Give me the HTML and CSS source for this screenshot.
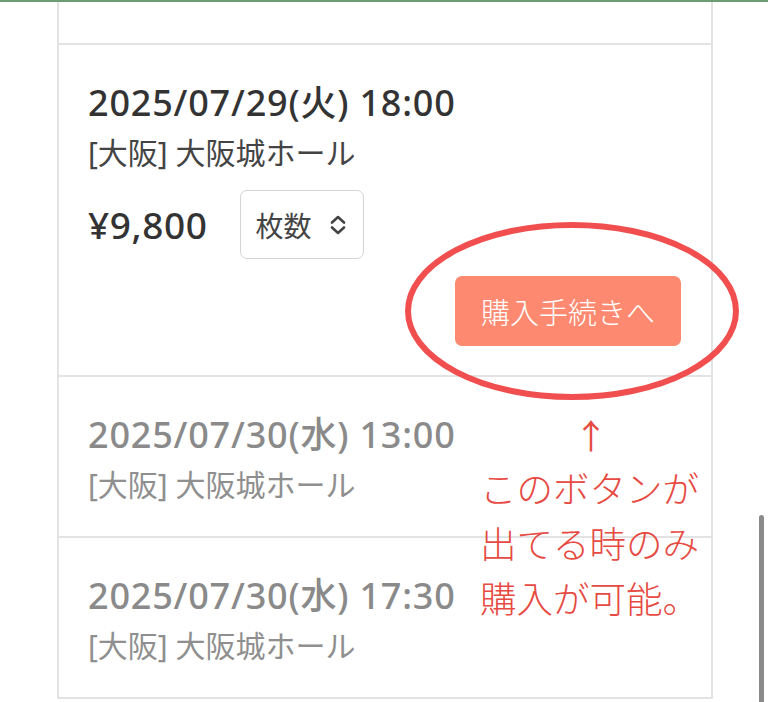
FILE: index.html
```html
<!DOCTYPE html>
<html lang="ja">
<head>
<meta charset="utf-8">
<link rel="stylesheet" href="styles.css">
</head>
<body>
<div class="topbar"></div>
<div class="page">
  <div class="list">
    <div class="row-tail"></div>
    <div class="row row-active">
      <div class="date">2025/07/29(火) 18:00</div>
      <div class="venue">[大阪] 大阪城ホール</div>
      <div class="price-line">
        <span class="price">¥9,800</span>
        <div class="select">
          <span>枚数</span>
          <svg class="chev" width="18" height="22" viewBox="0 0 18 22"><path d="M3 8.5 L9 3 L15 8.5 M3 13.5 L9 19 L15 13.5" fill="none" stroke="#444" stroke-width="2.6" stroke-linecap="round" stroke-linejoin="round"/></svg>
        </div>
      </div>
      <div class="btn-line">
        <div class="buy-btn">購入手続きへ</div>
      </div>
    </div>
    <div class="row row-off">
      <div class="date">2025/07/30(水) 13:00</div>
      <div class="venue">[大阪] 大阪城ホール</div>
    </div>
    <div class="row row-off">
      <div class="date">2025/07/30(水) 17:30</div>
      <div class="venue">[大阪] 大阪城ホール</div>
    </div>
  </div>
  <svg class="ring" width="340" height="182" viewBox="0 0 340 182"><ellipse cx="170" cy="91" rx="164" ry="86" fill="none" stroke="#f03c3c" stroke-opacity="0.9" stroke-width="6"/></svg>
  <div class="note">
    <div class="arrow">↑</div>
    <div class="note-text">このボタンが<br>出てる時のみ<br>購入が可能。</div>
  </div>
  <div class="scrollbar"></div>
</div>
</body>
</html>
```
FILE: styles.css
```css
html, body {
  margin: 0;
  padding: 0;
  background: #ffffff;
}
body {
  font-family: "Noto Sans", "Noto Sans CJK JP", sans-serif;
  width: 768px;
  height: 702px;
  overflow: hidden;
}
.topbar {
  height: 2px;
  background: #6b9c72;
}
.page {
  position: relative;
  height: 700px;
}
.list {
  margin-left: 57px;
  width: 656px;
  box-sizing: border-box;
  border-left: 2px solid #e3e3e3;
  border-right: 2px solid #e3e3e3;
}
.row-tail {
  height: 41px;
}
.row {
  border-top: 2px solid #e3e3e3;
  padding: 38px 30px 31px 29px;
}
.row:last-child {
  border-bottom: 2px solid #e3e3e3;
}
.row-active {
  height: 332px;
  box-sizing: border-box;
  padding-bottom: 0;
}
.date {
  font-size: 36px;
  font-weight: 500;
  line-height: 40px;
  letter-spacing: 0.8px;
  color: #333333;
  white-space: nowrap;
}
.venue {
  margin-top: 10px;
  font-size: 30px;
  line-height: 40px;
  color: #444444;
}
.row-off .date {
  color: #8a8a8a;
}
.row-off .venue {
  color: #8f8f8f;
}
.price-line {
  margin-top: 17px;
  display: flex;
  align-items: center;
  gap: 32px;
}
.price {
  font-size: 37px;
  font-weight: 500;
  letter-spacing: 0.6px;
  color: #333333;
}
.select {
  width: 124px;
  height: 69px;
  box-sizing: border-box;
  border: 1.5px solid #d4d4d4;
  border-radius: 7px;
  display: flex;
  align-items: center;
  padding-left: 15px;
  gap: 17px;
  font-size: 28px;
  color: #444444;
}
.chev {
  display: block;
}
.btn-line {
  margin-top: 17px;
  display: flex;
  justify-content: flex-end;
}
.buy-btn {
  width: 226px;
  height: 70px;
  background: #fd8a70;
  border-radius: 7px;
  color: #ffffff;
  font-size: 29px;
  display: flex;
  align-items: center;
  justify-content: center;
  font-weight: 300;
}
.ring {
  position: absolute;
  left: 402px;
  top: 218px;
}
.note {
  position: absolute;
  left: 480px;
  top: 408px;
  color: #e64a42;
  font-family: "Noto Sans CJK JP", sans-serif;
}
.arrow {
  width: 222px;
  text-align: center;
  font-size: 34px;
  line-height: 50px;
}
.note-text {
  font-size: 36.5px;
  line-height: 55px;
  font-weight: 300;
}
.scrollbar {
  position: absolute;
  right: 4px;
  top: 513px;
  width: 5px;
  height: 190px;
  background: #8a8a8a;
  border-radius: 3px 3px 0 0;
}
```
